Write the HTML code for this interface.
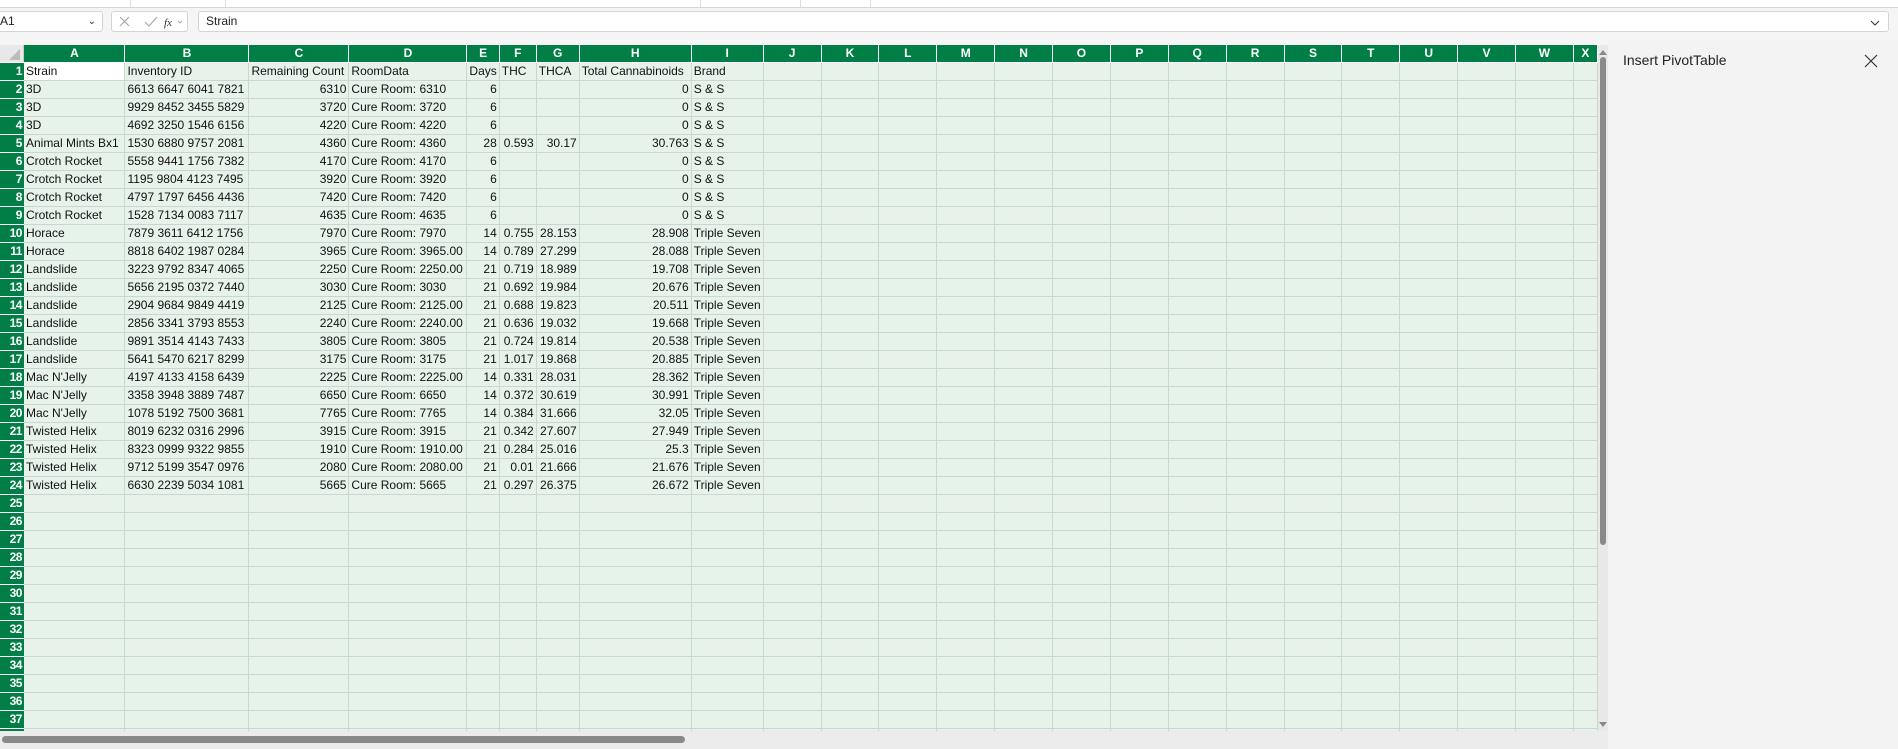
<!DOCTYPE html>
<html><head><meta charset="utf-8"><style>
*{margin:0;padding:0;box-sizing:border-box}
body{width:1898px;height:749px;overflow:hidden;background:#f5f5f5;font-family:"Liberation Sans",sans-serif;position:relative}
.top{position:absolute;left:0;top:0;width:1898px;height:8px;background:#fff;border-bottom:1px solid #d6d6d6}
.box{position:absolute;top:11px;height:21px;background:#fff;border:1px solid #d4d4d4;border-radius:3px;font-size:12px;color:#222;line-height:19px}
.grid{position:absolute;left:0;top:45px;width:1598px;height:686px;overflow:hidden;background:#e6f2ea}
table{border-collapse:collapse;table-layout:fixed;font-size:12px;color:#111}
td{height:18px;border-right:1px solid #c9d8ce;border-bottom:1px solid #c9d8ce;padding:0 2px;white-space:nowrap;overflow:hidden;line-height:17px}
tr.h td{height:17px;background:#017e45;color:#fff;font-weight:bold;text-align:center;border-right:1px solid #fff;border-bottom:1px solid #fff;font-size:12px}
td.r{background:#017e45;color:#fff;font-weight:bold;text-align:right;padding-right:2px;border-right:none;border-bottom:1px solid #fff;font-size:12px;letter-spacing:-0.5px}
.n{text-align:right}
.vs{position:absolute;left:1598px;top:45px;width:10px;height:686px;background:#e8e8e8}
.hs{position:absolute;left:0;top:731px;width:1608px;height:18px;background:#ececec}
.panel{position:absolute;left:1608px;top:40px;width:290px;height:709px;background:#f3f3f3}
</style></head><body>
<div class="top"></div>
<div style="position:absolute;left:130px;top:0;width:1px;height:7px;background:#ddd"></div>
<div style="position:absolute;left:225px;top:0;width:1px;height:7px;background:#ddd"></div>
<div style="position:absolute;left:700px;top:0;width:1px;height:7px;background:#ddd"></div>
<div style="position:absolute;left:800px;top:0;width:1px;height:7px;background:#ddd"></div>
<div style="position:absolute;left:870px;top:0;width:1px;height:7px;background:#ddd"></div>
<div class="box" style="left:-4px;width:107px;padding-left:3px">A1<span style="position:absolute;right:6px;top:0;font-size:10px;color:#333">&#8964;</span></div>
<div class="box" style="left:111px;width:77px">
<svg width="77" height="19" style="position:absolute;left:0;top:0"><g stroke="#aaa" stroke-width="1.2" fill="none"><path d="M8 5l9 9M17 5l-9 9"/><path d="M33 10l4 4 8-9"/></g><text x="52" y="14" font-size="11" font-style="italic" fill="#333" font-family="Liberation Serif">fx</text><path d="M66 9l2 2 2-2" stroke="#aaa" fill="none"/></svg></div>
<div class="box" style="left:198px;width:1691px;padding-left:7px">Strain<svg width="10" height="8" style="position:absolute;right:8px;top:7px"><path d="M1 2l4 4 4-4" stroke="#333" fill="none"/></svg></div>

<div class="grid"><table>
<colgroup><col style="width:24px"><col style="width:101px"><col style="width:124px"><col style="width:100px"><col style="width:118px"><col style="width:31px"><col style="width:37px"><col style="width:43px"><col style="width:112px"><col style="width:72px"><col style="width:58px"><col style="width:58px"><col style="width:58px"><col style="width:58px"><col style="width:58px"><col style="width:58px"><col style="width:58px"><col style="width:58px"><col style="width:58px"><col style="width:58px"><col style="width:58px"><col style="width:58px"><col style="width:58px"><col style="width:58px"><col style="width:24px"></colgroup>
<tr class="h"><td style="background:#e8e8e8;border-right:1px solid #ccc"></td><td>A</td><td>B</td><td>C</td><td>D</td><td>E</td><td>F</td><td>G</td><td>H</td><td>I</td><td>J</td><td>K</td><td>L</td><td>M</td><td>N</td><td>O</td><td>P</td><td>Q</td><td>R</td><td>S</td><td>T</td><td>U</td><td>V</td><td>W</td><td>X</td></tr>
<tr><td class="r">1</td><td style="background:#fff">Strain</td><td>Inventory ID</td><td>Remaining Count</td><td>RoomData</td><td>Days</td><td>THC</td><td>THCA</td><td>Total Cannabinoids</td><td>Brand</td><td></td><td></td><td></td><td></td><td></td><td></td><td></td><td></td><td></td><td></td><td></td><td></td><td></td><td></td><td></td></tr>
<tr><td class="r">2</td><td>3D</td><td>6613 6647 6041 7821</td><td class="n">6310</td><td>Cure Room: 6310</td><td class="n">6</td><td></td><td></td><td class="n">0</td><td>S &amp; S</td><td></td><td></td><td></td><td></td><td></td><td></td><td></td><td></td><td></td><td></td><td></td><td></td><td></td><td></td><td></td></tr>
<tr><td class="r">3</td><td>3D</td><td>9929 8452 3455 5829</td><td class="n">3720</td><td>Cure Room: 3720</td><td class="n">6</td><td></td><td></td><td class="n">0</td><td>S &amp; S</td><td></td><td></td><td></td><td></td><td></td><td></td><td></td><td></td><td></td><td></td><td></td><td></td><td></td><td></td><td></td></tr>
<tr><td class="r">4</td><td>3D</td><td>4692 3250 1546 6156</td><td class="n">4220</td><td>Cure Room: 4220</td><td class="n">6</td><td></td><td></td><td class="n">0</td><td>S &amp; S</td><td></td><td></td><td></td><td></td><td></td><td></td><td></td><td></td><td></td><td></td><td></td><td></td><td></td><td></td><td></td></tr>
<tr><td class="r">5</td><td>Animal Mints Bx1</td><td>1530 6880 9757 2081</td><td class="n">4360</td><td>Cure Room: 4360</td><td class="n">28</td><td class="n">0.593</td><td class="n">30.17</td><td class="n">30.763</td><td>S &amp; S</td><td></td><td></td><td></td><td></td><td></td><td></td><td></td><td></td><td></td><td></td><td></td><td></td><td></td><td></td><td></td></tr>
<tr><td class="r">6</td><td>Crotch Rocket</td><td>5558 9441 1756 7382</td><td class="n">4170</td><td>Cure Room: 4170</td><td class="n">6</td><td></td><td></td><td class="n">0</td><td>S &amp; S</td><td></td><td></td><td></td><td></td><td></td><td></td><td></td><td></td><td></td><td></td><td></td><td></td><td></td><td></td><td></td></tr>
<tr><td class="r">7</td><td>Crotch Rocket</td><td>1195 9804 4123 7495</td><td class="n">3920</td><td>Cure Room: 3920</td><td class="n">6</td><td></td><td></td><td class="n">0</td><td>S &amp; S</td><td></td><td></td><td></td><td></td><td></td><td></td><td></td><td></td><td></td><td></td><td></td><td></td><td></td><td></td><td></td></tr>
<tr><td class="r">8</td><td>Crotch Rocket</td><td>4797 1797 6456 4436</td><td class="n">7420</td><td>Cure Room: 7420</td><td class="n">6</td><td></td><td></td><td class="n">0</td><td>S &amp; S</td><td></td><td></td><td></td><td></td><td></td><td></td><td></td><td></td><td></td><td></td><td></td><td></td><td></td><td></td><td></td></tr>
<tr><td class="r">9</td><td>Crotch Rocket</td><td>1528 7134 0083 7117</td><td class="n">4635</td><td>Cure Room: 4635</td><td class="n">6</td><td></td><td></td><td class="n">0</td><td>S &amp; S</td><td></td><td></td><td></td><td></td><td></td><td></td><td></td><td></td><td></td><td></td><td></td><td></td><td></td><td></td><td></td></tr>
<tr><td class="r">10</td><td>Horace</td><td>7879 3611 6412 1756</td><td class="n">7970</td><td>Cure Room: 7970</td><td class="n">14</td><td class="n">0.755</td><td class="n">28.153</td><td class="n">28.908</td><td>Triple Seven</td><td></td><td></td><td></td><td></td><td></td><td></td><td></td><td></td><td></td><td></td><td></td><td></td><td></td><td></td><td></td></tr>
<tr><td class="r">11</td><td>Horace</td><td>8818 6402 1987 0284</td><td class="n">3965</td><td>Cure Room: 3965.00</td><td class="n">14</td><td class="n">0.789</td><td class="n">27.299</td><td class="n">28.088</td><td>Triple Seven</td><td></td><td></td><td></td><td></td><td></td><td></td><td></td><td></td><td></td><td></td><td></td><td></td><td></td><td></td><td></td></tr>
<tr><td class="r">12</td><td>Landslide</td><td>3223 9792 8347 4065</td><td class="n">2250</td><td>Cure Room: 2250.00</td><td class="n">21</td><td class="n">0.719</td><td class="n">18.989</td><td class="n">19.708</td><td>Triple Seven</td><td></td><td></td><td></td><td></td><td></td><td></td><td></td><td></td><td></td><td></td><td></td><td></td><td></td><td></td><td></td></tr>
<tr><td class="r">13</td><td>Landslide</td><td>5656 2195 0372 7440</td><td class="n">3030</td><td>Cure Room: 3030</td><td class="n">21</td><td class="n">0.692</td><td class="n">19.984</td><td class="n">20.676</td><td>Triple Seven</td><td></td><td></td><td></td><td></td><td></td><td></td><td></td><td></td><td></td><td></td><td></td><td></td><td></td><td></td><td></td></tr>
<tr><td class="r">14</td><td>Landslide</td><td>2904 9684 9849 4419</td><td class="n">2125</td><td>Cure Room: 2125.00</td><td class="n">21</td><td class="n">0.688</td><td class="n">19.823</td><td class="n">20.511</td><td>Triple Seven</td><td></td><td></td><td></td><td></td><td></td><td></td><td></td><td></td><td></td><td></td><td></td><td></td><td></td><td></td><td></td></tr>
<tr><td class="r">15</td><td>Landslide</td><td>2856 3341 3793 8553</td><td class="n">2240</td><td>Cure Room: 2240.00</td><td class="n">21</td><td class="n">0.636</td><td class="n">19.032</td><td class="n">19.668</td><td>Triple Seven</td><td></td><td></td><td></td><td></td><td></td><td></td><td></td><td></td><td></td><td></td><td></td><td></td><td></td><td></td><td></td></tr>
<tr><td class="r">16</td><td>Landslide</td><td>9891 3514 4143 7433</td><td class="n">3805</td><td>Cure Room: 3805</td><td class="n">21</td><td class="n">0.724</td><td class="n">19.814</td><td class="n">20.538</td><td>Triple Seven</td><td></td><td></td><td></td><td></td><td></td><td></td><td></td><td></td><td></td><td></td><td></td><td></td><td></td><td></td><td></td></tr>
<tr><td class="r">17</td><td>Landslide</td><td>5641 5470 6217 8299</td><td class="n">3175</td><td>Cure Room: 3175</td><td class="n">21</td><td class="n">1.017</td><td class="n">19.868</td><td class="n">20.885</td><td>Triple Seven</td><td></td><td></td><td></td><td></td><td></td><td></td><td></td><td></td><td></td><td></td><td></td><td></td><td></td><td></td><td></td></tr>
<tr><td class="r">18</td><td>Mac N'Jelly</td><td>4197 4133 4158 6439</td><td class="n">2225</td><td>Cure Room: 2225.00</td><td class="n">14</td><td class="n">0.331</td><td class="n">28.031</td><td class="n">28.362</td><td>Triple Seven</td><td></td><td></td><td></td><td></td><td></td><td></td><td></td><td></td><td></td><td></td><td></td><td></td><td></td><td></td><td></td></tr>
<tr><td class="r">19</td><td>Mac N'Jelly</td><td>3358 3948 3889 7487</td><td class="n">6650</td><td>Cure Room: 6650</td><td class="n">14</td><td class="n">0.372</td><td class="n">30.619</td><td class="n">30.991</td><td>Triple Seven</td><td></td><td></td><td></td><td></td><td></td><td></td><td></td><td></td><td></td><td></td><td></td><td></td><td></td><td></td><td></td></tr>
<tr><td class="r">20</td><td>Mac N'Jelly</td><td>1078 5192 7500 3681</td><td class="n">7765</td><td>Cure Room: 7765</td><td class="n">14</td><td class="n">0.384</td><td class="n">31.666</td><td class="n">32.05</td><td>Triple Seven</td><td></td><td></td><td></td><td></td><td></td><td></td><td></td><td></td><td></td><td></td><td></td><td></td><td></td><td></td><td></td></tr>
<tr><td class="r">21</td><td>Twisted Helix</td><td>8019 6232 0316 2996</td><td class="n">3915</td><td>Cure Room: 3915</td><td class="n">21</td><td class="n">0.342</td><td class="n">27.607</td><td class="n">27.949</td><td>Triple Seven</td><td></td><td></td><td></td><td></td><td></td><td></td><td></td><td></td><td></td><td></td><td></td><td></td><td></td><td></td><td></td></tr>
<tr><td class="r">22</td><td>Twisted Helix</td><td>8323 0999 9322 9855</td><td class="n">1910</td><td>Cure Room: 1910.00</td><td class="n">21</td><td class="n">0.284</td><td class="n">25.016</td><td class="n">25.3</td><td>Triple Seven</td><td></td><td></td><td></td><td></td><td></td><td></td><td></td><td></td><td></td><td></td><td></td><td></td><td></td><td></td><td></td></tr>
<tr><td class="r">23</td><td>Twisted Helix</td><td>9712 5199 3547 0976</td><td class="n">2080</td><td>Cure Room: 2080.00</td><td class="n">21</td><td class="n">0.01</td><td class="n">21.666</td><td class="n">21.676</td><td>Triple Seven</td><td></td><td></td><td></td><td></td><td></td><td></td><td></td><td></td><td></td><td></td><td></td><td></td><td></td><td></td><td></td></tr>
<tr><td class="r">24</td><td>Twisted Helix</td><td>6630 2239 5034 1081</td><td class="n">5665</td><td>Cure Room: 5665</td><td class="n">21</td><td class="n">0.297</td><td class="n">26.375</td><td class="n">26.672</td><td>Triple Seven</td><td></td><td></td><td></td><td></td><td></td><td></td><td></td><td></td><td></td><td></td><td></td><td></td><td></td><td></td><td></td></tr>
<tr><td class="r">25</td><td></td><td></td><td></td><td></td><td></td><td></td><td></td><td></td><td></td><td></td><td></td><td></td><td></td><td></td><td></td><td></td><td></td><td></td><td></td><td></td><td></td><td></td><td></td><td></td></tr>
<tr><td class="r">26</td><td></td><td></td><td></td><td></td><td></td><td></td><td></td><td></td><td></td><td></td><td></td><td></td><td></td><td></td><td></td><td></td><td></td><td></td><td></td><td></td><td></td><td></td><td></td><td></td></tr>
<tr><td class="r">27</td><td></td><td></td><td></td><td></td><td></td><td></td><td></td><td></td><td></td><td></td><td></td><td></td><td></td><td></td><td></td><td></td><td></td><td></td><td></td><td></td><td></td><td></td><td></td><td></td></tr>
<tr><td class="r">28</td><td></td><td></td><td></td><td></td><td></td><td></td><td></td><td></td><td></td><td></td><td></td><td></td><td></td><td></td><td></td><td></td><td></td><td></td><td></td><td></td><td></td><td></td><td></td><td></td></tr>
<tr><td class="r">29</td><td></td><td></td><td></td><td></td><td></td><td></td><td></td><td></td><td></td><td></td><td></td><td></td><td></td><td></td><td></td><td></td><td></td><td></td><td></td><td></td><td></td><td></td><td></td><td></td></tr>
<tr><td class="r">30</td><td></td><td></td><td></td><td></td><td></td><td></td><td></td><td></td><td></td><td></td><td></td><td></td><td></td><td></td><td></td><td></td><td></td><td></td><td></td><td></td><td></td><td></td><td></td><td></td></tr>
<tr><td class="r">31</td><td></td><td></td><td></td><td></td><td></td><td></td><td></td><td></td><td></td><td></td><td></td><td></td><td></td><td></td><td></td><td></td><td></td><td></td><td></td><td></td><td></td><td></td><td></td><td></td></tr>
<tr><td class="r">32</td><td></td><td></td><td></td><td></td><td></td><td></td><td></td><td></td><td></td><td></td><td></td><td></td><td></td><td></td><td></td><td></td><td></td><td></td><td></td><td></td><td></td><td></td><td></td><td></td></tr>
<tr><td class="r">33</td><td></td><td></td><td></td><td></td><td></td><td></td><td></td><td></td><td></td><td></td><td></td><td></td><td></td><td></td><td></td><td></td><td></td><td></td><td></td><td></td><td></td><td></td><td></td><td></td></tr>
<tr><td class="r">34</td><td></td><td></td><td></td><td></td><td></td><td></td><td></td><td></td><td></td><td></td><td></td><td></td><td></td><td></td><td></td><td></td><td></td><td></td><td></td><td></td><td></td><td></td><td></td><td></td></tr>
<tr><td class="r">35</td><td></td><td></td><td></td><td></td><td></td><td></td><td></td><td></td><td></td><td></td><td></td><td></td><td></td><td></td><td></td><td></td><td></td><td></td><td></td><td></td><td></td><td></td><td></td><td></td></tr>
<tr><td class="r">36</td><td></td><td></td><td></td><td></td><td></td><td></td><td></td><td></td><td></td><td></td><td></td><td></td><td></td><td></td><td></td><td></td><td></td><td></td><td></td><td></td><td></td><td></td><td></td><td></td></tr>
<tr><td class="r">37</td><td></td><td></td><td></td><td></td><td></td><td></td><td></td><td></td><td></td><td></td><td></td><td></td><td></td><td></td><td></td><td></td><td></td><td></td><td></td><td></td><td></td><td></td><td></td><td></td></tr>
<tr><td class="r">38</td><td></td><td></td><td></td><td></td><td></td><td></td><td></td><td></td><td></td><td></td><td></td><td></td><td></td><td></td><td></td><td></td><td></td><td></td><td></td><td></td><td></td><td></td><td></td><td></td></tr>
</table>
<svg width="14" height="14" style="position:absolute;left:7px;top:2px"><path d="M13 2L13 13L2 13Z" fill="#bbb"/></svg>
</div>
<div class="vs"><svg width="10" height="8" style="position:absolute;left:0;top:3px"><path d="M1 7L5 2L9 7Z" fill="#888"/></svg><div style="position:absolute;left:2px;top:12px;width:6px;height:488px;background:#8a8a8a;border-radius:3px"></div><svg width="10" height="8" style="position:absolute;left:0;top:676px"><path d="M1 1L5 6L9 1Z" fill="#888"/></svg></div>
<div class="hs"><div style="position:absolute;left:2px;top:5px;width:683px;height:7px;background:#8a8a8a;border-radius:4px"></div></div>
<div class="panel">
<div style="position:absolute;left:15px;top:12px;font-size:14px;color:#222">Insert PivotTable</div>
<svg width="14" height="14" style="position:absolute;left:256px;top:14px"><path d="M1 1L13 13M13 1L1 13" stroke="#333" stroke-width="1.2"/></svg>
</div>
</body></html>
